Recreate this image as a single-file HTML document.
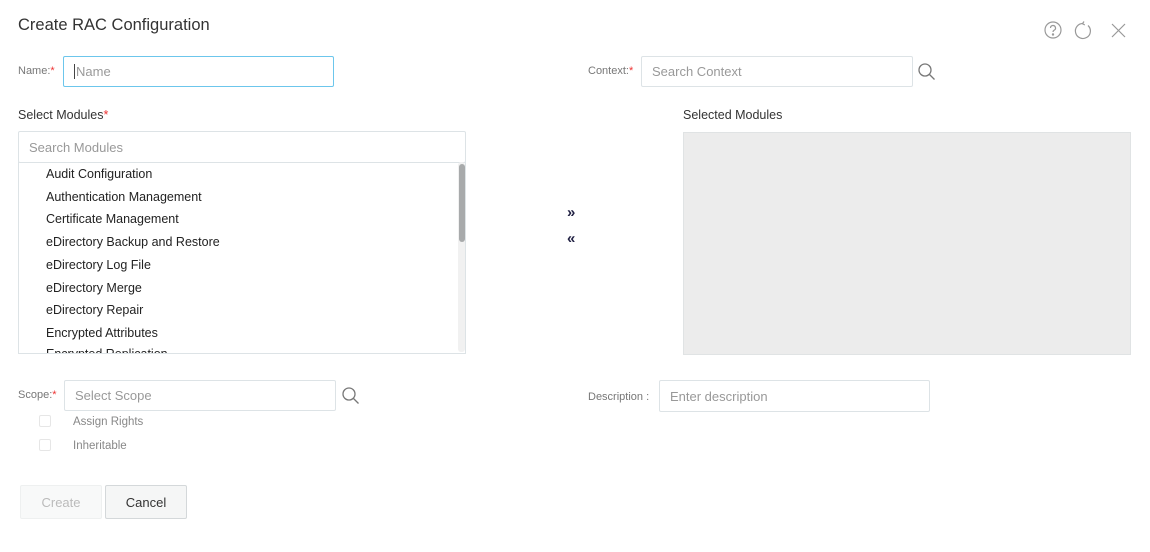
<!DOCTYPE html>
<html><head><style>
body{margin:0;width:1150px;height:552px;background:#fff;font-family:"Liberation Sans",sans-serif;position:relative;overflow:hidden}
.a{position:absolute}
.lbl{font-size:11px;color:#777}
.req{color:#e33}
.inp{position:absolute;box-sizing:border-box;border:1px solid #dde3e6;border-radius:2px;font-size:13px;color:#999;padding-left:10px;display:flex;align-items:center}
.item{position:absolute;left:46px;font-size:12.5px;color:#222}
.cb{position:absolute;left:39px;width:12px;height:12px;border:1px solid #e6e6e6;border-radius:2px;box-sizing:border-box}
</style></head><body>
<div class="a" style="left:18px;top:16px;font-size:16.5px;color:#333">Create RAC Configuration</div>
<svg class="a" style="left:1040px;top:18px" width="95" height="24" viewBox="0 0 95 24" fill="none" stroke="#999" stroke-width="1.2">
<circle cx="13" cy="12" r="8"/>
<path d="M10.5 10a2.5 2.5 0 1 1 3.5 2.3c-.8.4-1 .9-1 1.7"/><circle cx="13" cy="16.5" r=".6" fill="#999"/>
<path d="M43 5.5a7.5 7.5 0 1 0 5 2"/><path d="M44 3.5l-1.5 2.2 2.3 1.3"/>
<path d="M72 6l13 13M85 6L72 19"/>
</svg>
<div class="a lbl" style="left:18px;top:65px">Name:<span class="req">*</span></div>
<div class="inp" style="left:63px;top:56px;width:271px;height:31px;border-color:#6cc6ec"><span style="border-left:1px solid #444;padding-left:1px">Name</span></div>
<div class="a lbl" style="left:588px;top:65px">Context:<span class="req">*</span></div>
<div class="inp" style="left:641px;top:56px;width:272px;height:31px">Search Context</div>
<svg class="a" style="left:917px;top:62px" width="20" height="20" fill="none" stroke="#777" stroke-width="1.3"><circle cx="8" cy="8" r="6"/><path d="M12.5 12.5l5 5"/></svg>
<div class="a" style="left:18px;top:108px;font-size:12.5px;color:#333">Select Modules<span class="req">*</span></div>
<div class="inp" style="left:18px;top:131px;width:448px;height:32px">Search Modules</div>
<div class="a" style="left:18px;top:162px;width:448px;height:192px;box-sizing:border-box;border:1px solid #dde3e6;border-top:none;overflow:hidden">
<div class="a" style="left:439px;top:0;width:7px;height:190px;background:#f1f1f1;border-radius:3px"></div>
<div class="a" style="left:440px;top:2px;width:6px;height:78px;background:#a8aaab;border-radius:3px"></div>
</div>
<div class="item" style="top:167px">Audit Configuration</div>
<div class="item" style="top:190px">Authentication Management</div>
<div class="item" style="top:212px">Certificate Management</div>
<div class="item" style="top:235px">eDirectory Backup and Restore</div>
<div class="item" style="top:258px">eDirectory Log File</div>
<div class="item" style="top:281px">eDirectory Merge</div>
<div class="item" style="top:303px">eDirectory Repair</div>
<div class="item" style="top:326px">Encrypted Attributes</div>
<div class="a" style="left:19px;top:348px;width:438px;height:5px;overflow:hidden"><div class="item" style="left:27px;top:-1px">Encrypted Replication</div></div>
<div class="a" style="left:567px;top:204px;font-size:15px;font-weight:bold;color:#224">»</div>
<div class="a" style="left:567px;top:230px;font-size:15px;font-weight:bold;color:#224">«</div>
<div class="a" style="left:683px;top:108px;font-size:12.5px;color:#333">Selected Modules</div>
<div class="a" style="left:683px;top:132px;width:448px;height:223px;box-sizing:border-box;background:#ececec;border:1px solid #e0e3e4"></div>
<div class="a lbl" style="left:18px;top:389px">Scope:<span class="req">*</span></div>
<div class="inp" style="left:64px;top:380px;width:272px;height:31px">Select Scope</div>
<svg class="a" style="left:341px;top:386px" width="20" height="20" fill="none" stroke="#777" stroke-width="1.3"><circle cx="8" cy="8" r="6"/><path d="M12.5 12.5l5 5"/></svg>
<div class="cb" style="top:415px"></div>
<div class="a" style="left:73px;top:416px;font-size:11.5px;color:#888">Assign Rights</div>
<div class="cb" style="top:439px"></div>
<div class="a" style="left:73px;top:440px;font-size:11.5px;color:#888">Inheritable</div>
<div class="a lbl" style="left:588px;top:391px">Description :</div>
<div class="inp" style="left:659px;top:380px;width:271px;height:32px;align-items:flex-start;padding-top:8px">Enter description</div>
<div class="a" style="left:20px;top:485px;width:82px;height:34px;box-sizing:border-box;border:1px solid #eef0f0;background:#f8f9f9;border-radius:2px;font-size:13px;color:#bbb;display:flex;align-items:center;justify-content:center">Create</div>
<div class="a" style="left:105px;top:485px;width:82px;height:34px;box-sizing:border-box;border:1px solid #d4d8da;background:#f5f6f6;border-radius:2px;font-size:13px;color:#333;display:flex;align-items:center;justify-content:center">Cancel</div>
</body></html>
